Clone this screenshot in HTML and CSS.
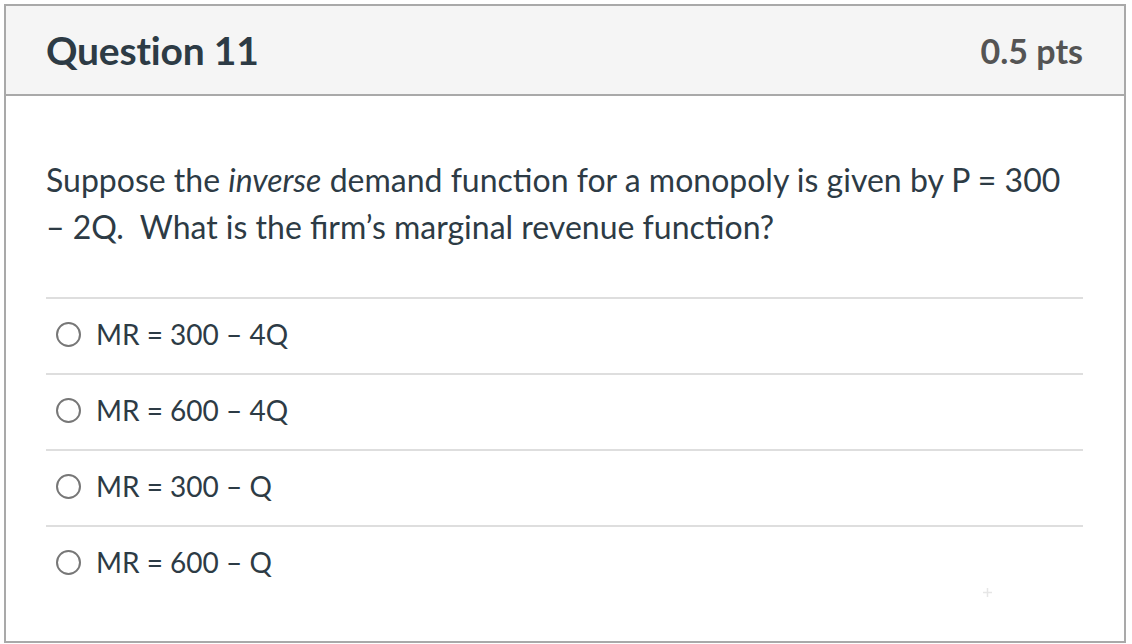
FILE: index.html
```html
<!DOCTYPE html>
<html>
<head>
<meta charset="utf-8">
<link rel="stylesheet" href="styles.css">
</head>
<body>
<div class="question">
  <div class="q-header">
    <h2 class="q-title">Question 11</h2>
    <span class="q-points">0.5 pts</span>
  </div>
  <div class="q-body">
    <p class="q-text">Suppose the <em>inverse</em> demand function for a monopoly is given by P = 300 – 2Q.&nbsp; What is the firm’s marginal revenue function?</p>
    <ul class="answers">
      <li class="answer"><span class="radio"></span><span class="label">MR = 300 – 4Q</span></li>
      <li class="answer"><span class="radio"></span><span class="label">MR = 600 – 4Q</span></li>
      <li class="answer"><span class="radio"></span><span class="label">MR = 300 – Q</span></li>
      <li class="answer"><span class="radio"></span><span class="label">MR = 600 – Q</span></li>
    </ul>
  </div>
  <svg class="sparkle" width="9" height="9" viewBox="0 0 9 9"><path d="M4.5 0V9M0 4.5H9" stroke="#e6e6e6" stroke-width="1.5"/></svg>
</div>
</body>
</html>
```
FILE: styles.css
```css
html, body {
  margin: 0;
  padding: 0;
  background: #fff;
}
body {
  padding: 4px 6px 1px 4px;
  font-family: Lato, "Liberation Sans", sans-serif;
  color: #2d3b45;
}
.question {
  position: relative;
  border: 2px solid #a9a9a9;
  height: 635px;
  box-sizing: content-box;
}
.q-header {
  background: #f5f5f5;
  border-bottom: 2px solid #a9a9a9;
  height: 88px;
  display: flex;
  align-items: center;
  justify-content: space-between;
  padding: 0 41px 0 40px;
}
.q-title {
  margin: 0;
  font-size: 39px;
  font-weight: 700;
  color: #2d3b45;
  letter-spacing: -0.2px;
}
.q-points {
  font-size: 34px;
  font-weight: 700;
  color: #545454;
}
.q-body {
  padding: 60px 41px 0 40px;
}
.q-text {
  margin: 0;
  padding-right: 6px;
  font-size: 32px;
  line-height: 47px;
}
.answers {
  list-style: none;
  margin: 47px 0 0;
  padding: 0;
}
.answer {
  border-top: 2px solid #dedede;
  display: flex;
  align-items: center;
  padding-left: 10px;
  padding-bottom: 4px;
  box-sizing: border-box;
  height: 76px;
}
.radio {
  width: 21px;
  height: 21px;
  border: 2px solid #777;
  border-radius: 50%;
  margin-right: 15px;
  flex: none;
}
.label {
  font-size: 28px;
}
.sparkle {
  position: absolute;
  left: 977px;
  top: 582px;
}
```
